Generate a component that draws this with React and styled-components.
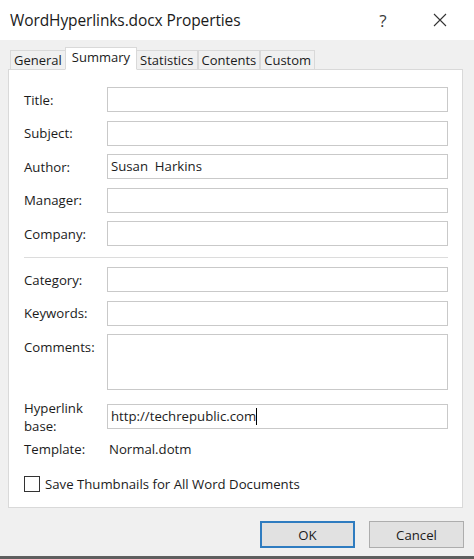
import React from 'react';
import styled, { createGlobalStyle } from 'styled-components';

const GlobalStyle = createGlobalStyle`
	html, body {
		margin: 0;
		padding: 0;
		background: #f0f0f0;
	}
	body {
		font-family: "Open Sans", "Noto Sans", "Liberation Sans", sans-serif;
		color: #1b1b1b;
	}
`;

const Dialog = styled.div`
	width: 474px;
	height: 559px;
	display: flex;
	flex-direction: column;
	background: #f0f0f0;
	overflow: hidden;
`;

const TitleBar = styled.div`
	height: 40px;
	flex-shrink: 0;
	background: #ffffff;
	display: flex;
	align-items: center;
	padding-left: 10px;
`;

const TitleText = styled.div`
	flex: 1;
	font-size: 15.5px;
	color: #1a1a1a;
	letter-spacing: -0.1px;
`;

const TitleButton = styled.div`
	width: ${p => p.$w}px;
	height: 40px;
	display: flex;
	align-items: center;
	justify-content: center;
	font-size: 17px;
	color: #3a3a3a;
`;

const Body = styled.div`
	flex: 1;
	display: flex;
	flex-direction: column;
	padding: 7px 11px 0 8px;
`;

const TabRow = styled.div`
	display: flex;
	align-items: flex-end;
	height: 23px;
	padding-left: 2px;
	position: relative;
	z-index: 1;
	margin-bottom: -1px;
`;

const Tab = styled.div`
	box-sizing: border-box;
	height: ${p => (p.$active ? 23 : 20)}px;
	padding: 0 ${p => (p.$active ? 6 : 3)}px;
	margin: 0 ${p => (p.$active ? -1 : 0)}px;
	border: 1px solid #d9d9d9;
	border-bottom: ${p => (p.$active ? '1px solid #ffffff' : '1px solid #d9d9d9')};
	background: ${p => (p.$active ? '#ffffff' : '#f0f0f0')};
	font-size: 13px;
	line-height: ${p => (p.$active ? 19 : 18)}px;
	position: relative;
	z-index: ${p => (p.$active ? 2 : 0)};
	& + & {
		border-left: ${p => (p.$active ? '1px solid #d9d9d9' : 'none')};
	}
`;

const Panel = styled.div`
	box-sizing: border-box;
	width: 455px;
	height: 439px;
	background: #ffffff;
	border: 1px solid #d9d9d9;
	padding: 17px 14px 0 15px;
	display: flex;
	flex-direction: column;
`;

const FieldGroup = styled.div`
	display: flex;
	flex-direction: column;
	gap: 8.5px;
`;

const Row = styled.div`
	display: flex;
	align-items: ${p => (p.$top ? 'flex-start' : 'center')};
	margin-top: ${p => p.$mt || 0}px;
`;

const Label = styled.div`
	width: 83px;
	flex-shrink: 0;
	font-size: 13.2px;
	line-height: 18px;
	padding-top: ${p => p.$pt || 0}px;
`;

const Field = styled.div`
	box-sizing: border-box;
	flex: 1;
	height: ${p => p.$h || 25}px;
	border: 1px solid #c9c9c9;
	background: #ffffff;
	font-size: 13.2px;
	line-height: 22px;
	padding-left: 3px;
	display: flex;
	align-items: flex-start;
	white-space: pre;
`;

const Caret = styled.span`
	display: inline-block;
	width: 1px;
	height: 17px;
	margin-top: 3px;
	background: #000;
`;

const Separator = styled.div`
	height: 1px;
	background: #dcdcdc;
	margin: 11px 0 9px;
`;

const StaticValue = styled.div`
	font-size: 13.2px;
	margin-left: 2px;
`;

const CheckRow = styled.div`
	display: flex;
	align-items: center;
	margin-top: 17px;
	font-size: 13.2px;
`;

const CheckBox = styled.div`
	box-sizing: border-box;
	width: 16px;
	height: 16px;
	border: 1px solid #333333;
	background: #ffffff;
	margin-right: 5px;
`;

const Footer = styled.div`
	display: flex;
	justify-content: flex-end;
	gap: 14px;
	padding: 13px 0 0;
	margin-right: -1px;
`;

const Button = styled.div`
	box-sizing: border-box;
	width: 95px;
	height: 27px;
	background: #e1e1e1;
	border: ${p => (p.$primary ? '2px solid #2f7cc0' : '1px solid #adadad')};
	display: flex;
	align-items: center;
	justify-content: center;
	font-size: 13.2px;
`;

const BottomEdge = styled.div`
	height: 3px;
	margin-top: auto;
	background: #5e5e5e;
	flex-shrink: 0;
`;

const tabs = ['General', 'Summary', 'Statistics', 'Contents', 'Custom'];

function CloseIcon() {
	return (
		<svg width="14" height="14" viewBox="0 0 14 14">
			<path d="M1 1 L13 13 M13 1 L1 13" stroke="#333" strokeWidth="1.1" fill="none" />
		</svg>
	);
}

export default function App() {
	return (
		<Dialog>
			<GlobalStyle />
			<TitleBar>
				<TitleText>WordHyperlinks.docx Properties</TitleText>
				<TitleButton $w={46}>?</TitleButton>
				<TitleButton $w={68}><CloseIcon /></TitleButton>
			</TitleBar>
			<Body>
				<TabRow>
					{tabs.map(t => (
						<Tab key={t} $active={t === 'Summary'}>{t}</Tab>
					))}
				</TabRow>
				<Panel>
					<FieldGroup>
						<Row><Label>Title:</Label><Field /></Row>
						<Row><Label>Subject:</Label><Field /></Row>
						<Row><Label>Author:</Label><Field>Susan  Harkins</Field></Row>
						<Row><Label>Manager:</Label><Field /></Row>
						<Row><Label>Company:</Label><Field /></Row>
					</FieldGroup>
					<Separator />
					<FieldGroup>
						<Row><Label>Category:</Label><Field /></Row>
						<Row><Label>Keywords:</Label><Field /></Row>
						<Row $top><Label $pt={4}>Comments:</Label><Field $h={56} /></Row>
						<Row>
							<Label>Hyperlink<br />base:</Label>
							<Field>http://techrepublic.com<Caret /></Field>
						</Row>
					</FieldGroup>
					<Row $mt={5}>
						<Label>Template:</Label>
						<StaticValue>Normal.dotm</StaticValue>
					</Row>
					<CheckRow>
						<CheckBox />
						Save Thumbnails for All Word Documents
					</CheckRow>
				</Panel>
				<Footer>
					<Button $primary>OK</Button>
					<Button>Cancel</Button>
				</Footer>
			</Body>
			<BottomEdge />
		</Dialog>
	);
}
